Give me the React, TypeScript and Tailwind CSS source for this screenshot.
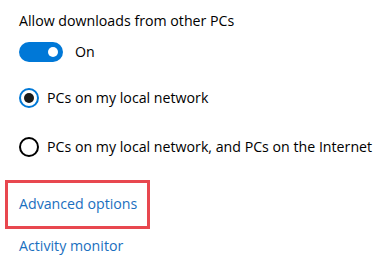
export default function App() {
  return (
    <main
      className="w-[390px] h-[268px] bg-white text-black overflow-hidden whitespace-nowrap"
      style={{ fontFamily: '"Open Sans", "Noto Sans", sans-serif' }}
    >
      <div className="pl-[19px] pt-[11px] text-[14.2px]">
        <p className="leading-[20px]">Allow downloads from other PCs</p>

        {/* Toggle */}
        <div className="mt-[11px] flex items-center gap-3 h-[20px]">
          <div className="w-[44px] h-[20px] rounded-full bg-[#0078d7] flex items-center justify-end pr-[5px]">
            <span className="w-[10px] h-[10px] rounded-full bg-white" />
          </div>
          <span className="leading-[20px]">On</span>
        </div>

        {/* Radios */}
        <div className="mt-[26px] flex items-center gap-2 h-[20px]">
          <span className="w-[20px] h-[20px] rounded-full border-2 border-[#0078d7] flex items-center justify-center">
            <span className="w-[10px] h-[10px] rounded-full bg-[#1a1a1a]" />
          </span>
          <span className="leading-[20px]">PCs on my local network</span>
        </div>
        <div className="mt-[29px] flex items-center gap-2 h-[20px]">
          <span className="w-[20px] h-[20px] rounded-full border-2 border-black" />
          <span className="leading-[20px]">PCs on my local network, and PCs on the Internet</span>
        </div>

        {/* Links */}
        <div className="mt-[23px] -ml-[14px] w-[145px] h-[49px] border-[3px] border-[#e8474f] flex items-center pl-[11px] pb-[2px]">
          <a className="text-[#1a6fc0] leading-[20px]">Advanced options</a>
        </div>
        <a className="block mt-[7px] text-[#1a6fc0] leading-[20px]">Activity monitor</a>
      </div>
    </main>
  )
}
